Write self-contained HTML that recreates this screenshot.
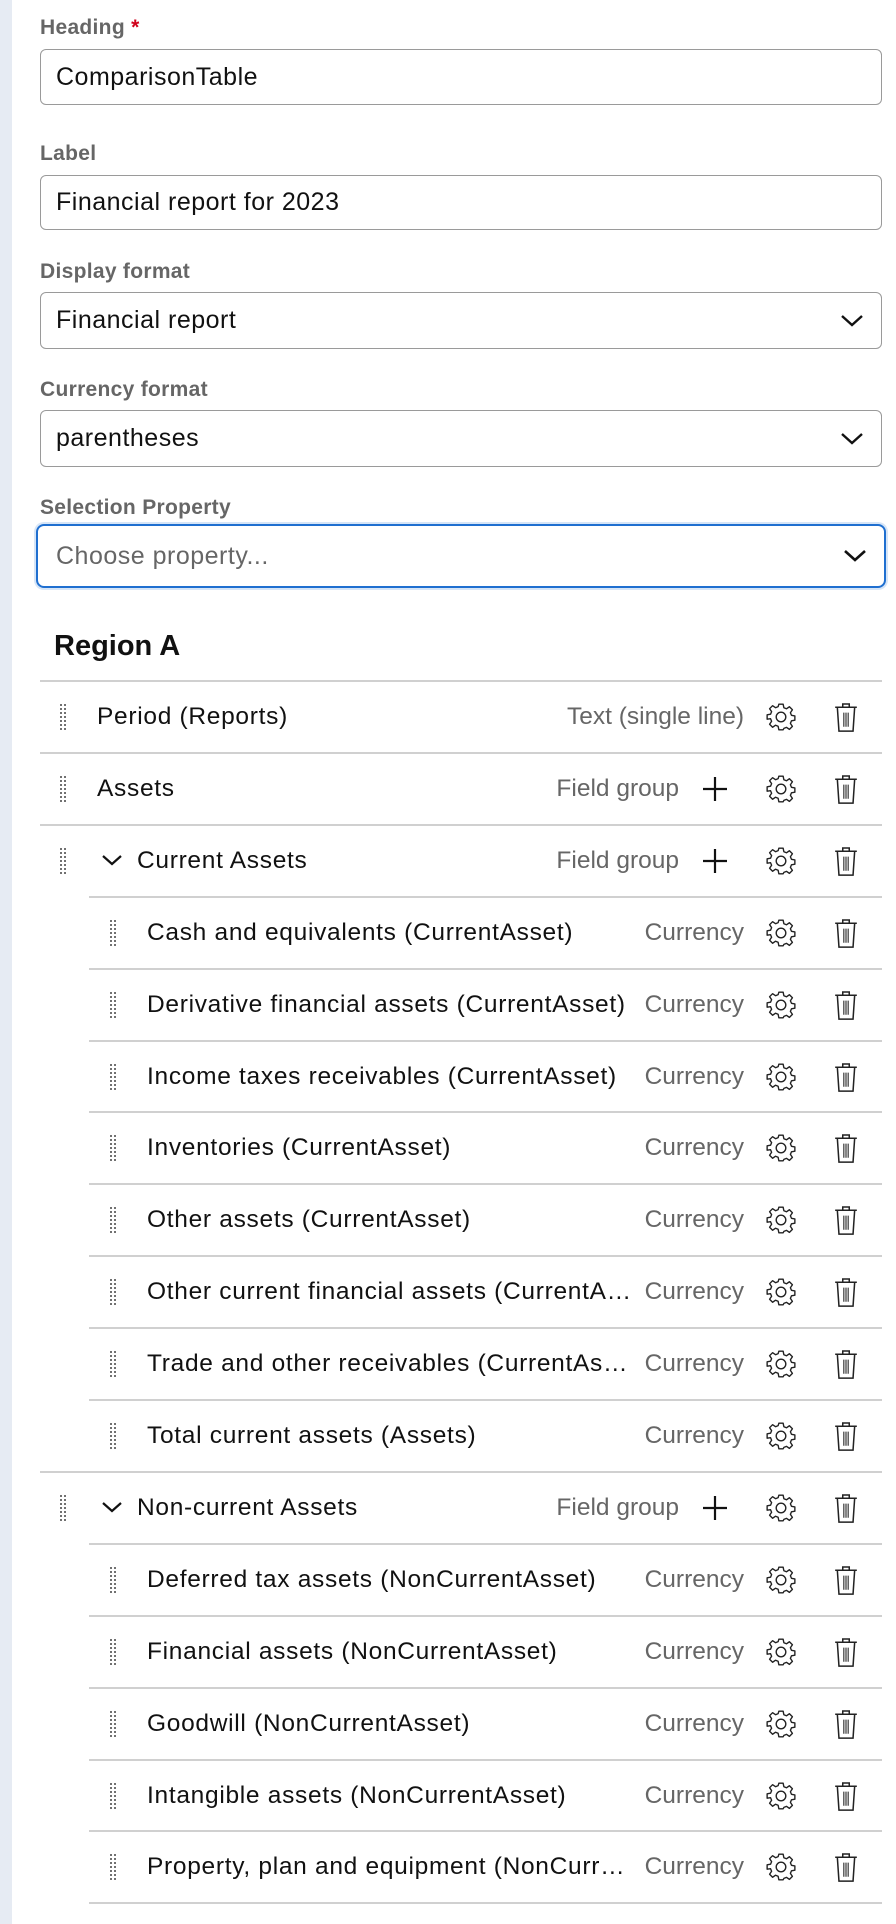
<!DOCTYPE html>
<html><head><meta charset="utf-8"><style>
*{box-sizing:border-box;margin:0;padding:0}
body{width:896px;height:1924px;background:#fff;font-family:"Liberation Sans",sans-serif;position:relative;overflow:hidden}
.side{position:absolute;left:0;top:0;width:12px;height:1924px;background:#e6ebf3}
.lbl{position:absolute;left:40px;font-size:21px;color:#666;font-weight:bold;letter-spacing:0.3px;line-height:24px}
.box{position:absolute;left:40px;width:842px;border:1px solid #9a9a9a;border-radius:6px;font-size:25px;letter-spacing:0.5px;color:#111;padding-left:15px;display:flex;align-items:center}
.chev{position:absolute;right:16px;top:50%;margin-top:-9px}
.line{position:absolute;height:2px;background:#d0d0d0;width:auto;right:14px}
.row{position:absolute;height:70px;left:0;right:0;font-size:24.5px;color:#111}
.row .t{position:absolute;top:50%;transform:translateY(-50%);white-space:nowrap;overflow:hidden;text-overflow:ellipsis;letter-spacing:0.7px}
.row .ty{position:absolute;right:152px;top:50%;transform:translateY(-50%);color:#666;white-space:nowrap}
.row .ty.p{right:217px}
.row svg{position:absolute;top:50%}
</style></head><body>
<div class="side"></div>

<div class="lbl" style="top:16px">Heading <span style="color:#d0021b">*</span></div>
<div class="box" style="top:49px;height:56px">ComparisonTable</div>
<div class="lbl" style="top:142px">Label</div>
<div class="box" style="top:175px;height:55px">Financial report for 2023</div>
<div class="lbl" style="top:260px">Display format</div>
<div class="box" style="top:292px;height:57px">Financial report<svg class="chev" width="26" height="18" viewBox="0 0 26 18"><path d="M3 4l10 9 10-9" fill="none" stroke="#111" stroke-width="2.4"/></svg></div>
<div class="lbl" style="top:378px">Currency format</div>
<div class="box" style="top:410px;height:57px">parentheses<svg class="chev" width="26" height="18" viewBox="0 0 26 18"><path d="M3 4l10 9 10-9" fill="none" stroke="#111" stroke-width="2.4"/></svg></div>
<div class="lbl" style="top:496px">Selection Property</div>
<div class="box" style="top:524px;left:36px;width:850px;height:64px;border:2px solid #1f6fd0;border-radius:8px;color:#666;padding-left:18px;box-shadow:0 0 0 2px #d6e5f7">Choose property...<svg class="chev" width="26" height="18" viewBox="0 0 26 18"><path d="M3 4l10 9 10-9" fill="none" stroke="#111" stroke-width="2.6"/></svg></div>

<div style="position:absolute;left:54px;top:628px;font-size:29px;font-weight:bold;color:#111;line-height:36px">Region A</div>

<div id="rows"></div>
<script>
const gear='<svg width="32" height="32" viewBox="0 0 30 30" style="left:765px;margin-top:-16px"><path d="M13 3h4l.7 3.3 2.4 1 2.8-1.9 2.8 2.8-1.9 2.8 1 2.4 3.2.6v4l-3.2.6-1 2.4 1.9 2.8-2.8 2.8-2.8-1.9-2.4 1L17 27h-4l-.7-3.3-2.4-1-2.8 1.9-2.8-2.8 1.9-2.8-1-2.4L2 17v-4l3.2-.6 1-2.4-1.9-2.8 2.8-2.8 2.8 1.9 2.4-1z" fill="none" stroke="#222" stroke-width="1.3" stroke-linejoin="round"/><circle cx="15" cy="15" r="4.5" fill="none" stroke="#222" stroke-width="1.3"/></svg>';
const trash='<svg width="26" height="34" viewBox="0 0 24 30" style="left:833px;margin-top:-17px"><path d="M2 6h20M9 6V3h6v3M4 6l1.5 22h13L20 6" fill="none" stroke="#222" stroke-width="1.4"/><path d="M10 11v13M12 11v13M14 11v13" stroke="#222" stroke-width="1"/></svg>';
const plus='<svg width="28" height="28" viewBox="0 0 28 28" style="left:701px;margin-top:-14px"><path d="M14 2v24M2 14h24" stroke="#111" stroke-width="2.2"/></svg>';
function drag(x){return '<svg width="8" height="28" viewBox="0 0 8 28" style="left:'+x+'px;margin-top:-14px">'+[0,1,2,3,4,5,6].map(i=>'<circle cx="2" cy="'+(2+i*4)+'" r="1" fill="#444"/><circle cx="6" cy="'+(2+i*4)+'" r="1" fill="#444"/>').join('')+'</svg>';}
const chevS='<svg width="22" height="14" viewBox="0 0 22 14" style="left:101px;margin-top:-8px"><path d="M2 3l9 8 9-8" fill="none" stroke="#111" stroke-width="2.2"/></svg>';
const rows=[
[0,'Period (Reports)','Text (single line)',0],
[0,'Assets','Field group',1],
[1,'Current Assets','Field group',1],
[2,'Cash and equivalents (CurrentAsset)','Currency',0],
[2,'Derivative financial assets (CurrentAsset)','Currency',0],
[2,'Income taxes receivables (CurrentAsset)','Currency',0],
[2,'Inventories (CurrentAsset)','Currency',0],
[2,'Other assets (CurrentAsset)','Currency',0],
[2,'Other current financial assets (CurrentAsset)','Currency',0],
[2,'Trade and other receivables (CurrentAsset)','Currency',0],
[2,'Total current assets (Assets)','Currency',0],
[1,'Non-current Assets','Field group',1],
[2,'Deferred tax assets (NonCurrentAsset)','Currency',0],
[2,'Financial assets (NonCurrentAsset)','Currency',0],
[2,'Goodwill (NonCurrentAsset)','Currency',0],
[2,'Intangible assets (NonCurrentAsset)','Currency',0],
[2,'Property, plan and equipment (NonCurrentAsset)','Currency',0]];
let h='';
const S=71.9;
rows.forEach((r,i)=>{
 const top=Math.round(680+i*S);
 h+='<div class="line" style="top:'+top+'px;left:'+(r[0]==2?89:40)+'px"></div>';
 let inner='';
 if(r[0]==0){inner+=drag(59)+'<div class="t" style="left:97px;max-width:440px">'+r[1]+'</div>';}
 else if(r[0]==1){inner+=drag(59)+chevS+'<div class="t" style="left:137px">'+r[1]+'</div>';}
 else {inner+=drag(109)+'<div class="t" style="left:147px;max-width:486px">'+r[1]+'</div>';}
 inner+='<div class="ty'+(r[3]?' p':'')+'">'+r[2]+'</div>';
 if(r[3])inner+=plus;
 inner+=gear+trash;
 h+='<div class="row" style="top:'+(top+2)+'px">'+inner+'</div>';
});
h+='<div class="line" style="top:'+Math.round(680+17*S)+'px;left:89px"></div>';
document.getElementById('rows').innerHTML=h;
</script>
</body></html>
